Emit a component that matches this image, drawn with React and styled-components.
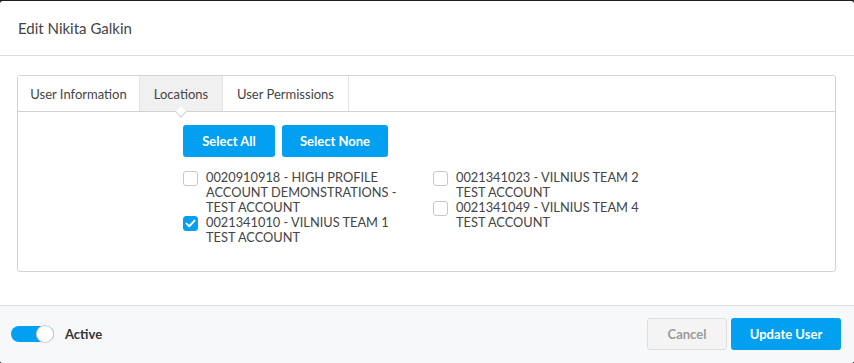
import styled, { createGlobalStyle } from "styled-components";

const GlobalStyle = createGlobalStyle`
  html, body {
    margin: 0;
    padding: 0;
    background: #1e1e1e;
  }
  body {
    font-family: "Lato", "Open Sans", sans-serif;
    color: #444;
  }
`;

const columns = [
  [
    { id: "0020910918", name: "HIGH PROFILE ACCOUNT DEMONSTRATIONS - TEST ACCOUNT", checked: false },
    { id: "0021341010", name: "VILNIUS TEAM 1 TEST ACCOUNT", checked: true },
  ],
  [
    { id: "0021341023", name: "VILNIUS TEAM 2 TEST ACCOUNT", checked: false },
    { id: "0021341049", name: "VILNIUS TEAM 4 TEST ACCOUNT", checked: false },
  ],
];

const tabs = [
  { label: "User Information", width: 122 },
  { label: "Locations", width: 83, active: true },
  { label: "User Permissions", width: 126 },
];

export default function App() {
  return (
    <>
      <GlobalStyle />
      <Modal>
        <Header>Edit Nikita Galkin</Header>
        <Body>
          <Panel>
            <TabBar>
              {tabs.map((t) => (
                <Tab key={t.label} $active={t.active} $width={t.width}>
                  {t.label}
                </Tab>
              ))}
            </TabBar>
            <Content>
              <ButtonRow>
                <BlueButton $width={92}>Select All</BlueButton>
                <BlueButton $width={106}>Select None</BlueButton>
              </ButtonRow>
              <LocationColumns>
                {columns.map((col, i) => (
                  <Column key={i}>
                    {col.map((l) => (
                      <Item key={l.id}>
                        <Check $checked={l.checked}>
                          {l.checked && (
                            <svg width="11" height="9" viewBox="0 0 11 9">
                              <path
                                d="M1.5 4.6 L4.2 7.2 L9.6 1.6"
                                fill="none"
                                stroke="#fff"
                                strokeWidth="2"
                                strokeLinecap="round"
                                strokeLinejoin="round"
                              />
                            </svg>
                          )}
                        </Check>
                        <ItemText>
                          {l.id} - {l.name}
                        </ItemText>
                      </Item>
                    ))}
                  </Column>
                ))}
              </LocationColumns>
            </Content>
          </Panel>
        </Body>
        <Footer>
          <ToggleWrap>
            <Toggle>
              <Knob />
            </Toggle>
            <ToggleLabel>Active</ToggleLabel>
          </ToggleWrap>
          <Actions>
            <CancelButton>Cancel</CancelButton>
            <BlueButton $width={110}>Update User</BlueButton>
          </Actions>
        </Footer>
      </Modal>
    </>
  );
}

const Modal = styled.div`
  margin-top: 1px;
  height: 362px;
  width: 854px;
  background: #fff;
  border-radius: 3px;
  overflow: hidden;
  display: flex;
  flex-direction: column;
`;

const Header = styled.div`
  height: 54px;
  border-bottom: 1px solid #dedede;
  display: flex;
  align-items: center;
  padding-left: 18px;
  font-size: 15px;
  color: #444;
`;

const Body = styled.div`
  padding: 19px 18px 33px 17px;
`;

const Panel = styled.div`
  height: 195px;
  border: 1px solid #d2d2d2;
  border-radius: 3px;
`;

const TabBar = styled.div`
  display: flex;
  height: 35px;
  border-bottom: 1px solid #d2d2d2;
`;

const Tab = styled.div`
  position: relative;
  width: ${(p) => p.$width}px;
  display: flex;
  align-items: center;
  justify-content: center;
  font-size: 13px;
  color: #444;
  border-right: 1px solid #e2e2e2;
  background: ${(p) => (p.$active ? "#f0f0f0" : "#fff")};
  box-sizing: border-box;

  ${(p) =>
    p.$active &&
    `
    &::after {
      content: "";
      position: absolute;
      left: 50%;
      bottom: -5px;
      width: 7px;
      height: 7px;
      background: #fff;
      border-right: 1px solid #d2d2d2;
      border-bottom: 1px solid #d2d2d2;
      transform: translateX(-50%) rotate(45deg);
    }
  `}
`;

const Content = styled.div`
  padding: 13px 0 0 165px;
`;

const ButtonRow = styled.div`
  display: flex;
  gap: 7px;
`;

const BlueButton = styled.button`
  width: ${(p) => p.$width}px;
  height: 32px;
  border: none;
  border-radius: 3px;
  background: #039ff0;
  color: #fff;
  font-family: "Lato", sans-serif;
  font-weight: 700;
  font-size: 13px;
  padding: 0;
`;

const LocationColumns = styled.div`
  display: flex;
  align-items: flex-start;
  margin-top: 13px;
`;

const Column = styled.div`
  width: 250px;
  display: flex;
  flex-direction: column;
`;

const Item = styled.div`
  display: flex;
  align-items: flex-start;
  gap: 8px;
`;

const Check = styled.span`
  flex: none;
  width: 15px;
  height: 15px;
  margin-top: 1px;
  box-sizing: border-box;
  border-radius: 3px;
  border: 1px solid ${(p) => (p.$checked ? "#039ff0" : "#c8c8c8")};
  background: ${(p) => (p.$checked ? "#039ff0" : "#fff")};
  display: flex;
  align-items: center;
  justify-content: center;
`;

const ItemText = styled.span`
  width: 200px;
  font-size: 12.8px;
  line-height: 15px;
  color: #444;
`;

const Footer = styled.div`
  flex: 1;
  border-top: 1px solid #dcdcdc;
  background: #f7f8fa;
  display: flex;
  align-items: center;
  justify-content: space-between;
  padding: 0 13px 2px 11px;
`;

const ToggleWrap = styled.div`
  display: flex;
  align-items: center;
  gap: 11px;
`;

const Toggle = styled.div`
  position: relative;
  width: 43px;
  height: 16px;
  border-radius: 8px;
  background: #039ff0;
`;

const Knob = styled.span`
  position: absolute;
  right: 0;
  top: -1px;
  width: 18px;
  height: 18px;
  box-sizing: border-box;
  border-radius: 50%;
  background: #fff;
  border: 1px solid #cfcfcf;
`;

const ToggleLabel = styled.span`
  font-size: 13px;
  font-weight: 700;
  color: #333;
`;

const Actions = styled.div`
  display: flex;
  gap: 4px;
`;

const CancelButton = styled.button`
  width: 80px;
  height: 32px;
  border: 1px solid #dedede;
  border-radius: 3px;
  background: #f4f4f4;
  color: #9a9a9a;
  font-family: "Lato", sans-serif;
  font-weight: 700;
  font-size: 13px;
  padding: 0;
`;
